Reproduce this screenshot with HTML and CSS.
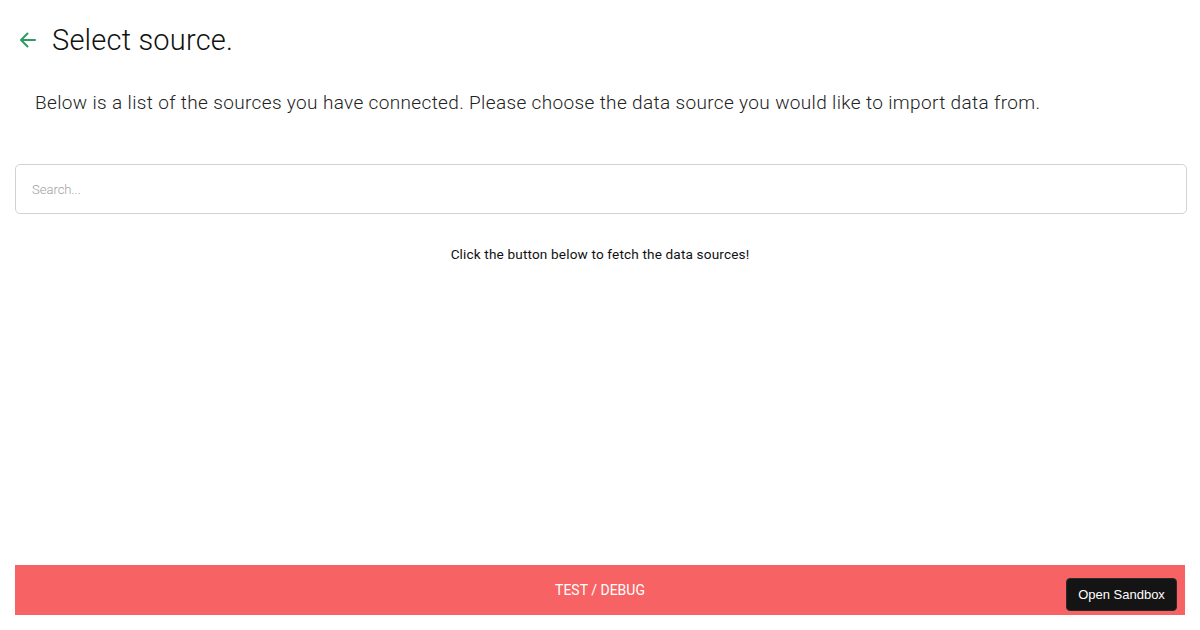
FILE: index.html
```html
<!DOCTYPE html>
<html>
<head>
<meta charset="utf-8">
<link rel="stylesheet" href="styles.css">
</head>
<body>
<div class="page">
  <header class="head">
    <svg class="back" width="20" height="20" viewBox="0 0 20 20"><path d="M17 10H3.5M9.5 3.5L3 10l6.5 6.5" fill="none" stroke="#2f9a63" stroke-width="2" stroke-linecap="round" stroke-linejoin="round"/></svg>
    <h1 class="title">Select source.</h1>
  </header>
  <p class="lead">Below is a list of the sources you have connected. Please choose the data source you would like to import data from.</p>
  <input class="search" type="text" placeholder="Search...">
  <p class="hint">Click the button below to fetch the data sources!</p>
  <div class="spacer"></div>
  <div class="debug">TEST / DEBUG</div>
</div>
<button class="sandbox">Open Sandbox</button>
</body>
</html>
```
FILE: styles.css
```css
html, body { margin: 0; padding: 0; background: #fff; }
body { font-family: Roboto, "Liberation Sans", sans-serif; color: #1a1a1a; width: 1200px; height: 630px; overflow: hidden; position: relative; }
.page { display: flex; flex-direction: column; height: 630px; padding: 0 15px 15px 15px; box-sizing: border-box; }
.head { display: flex; align-items: center; gap: 14px; height: 80px; padding-left: 3px; }
.back { display: block; }
.title { margin: 0; font-weight: 300; font-size: 29px; letter-spacing: 0.2px; color: #111; }
.lead { margin: 0; padding-left: 20px; font-size: 19px; font-weight: 300; letter-spacing: 0.35px; line-height: 46px; color: #222; }
.search { margin-top: 38px; height: 50px; box-sizing: border-box; border: 1px solid #d2d2d2; border-radius: 5px; padding: 0 16px; font-family: Roboto, sans-serif; font-size: 13px; width: 1172px; outline: none; }
.search::placeholder { color: #a0a0a0; font-weight: 300; }
.hint { margin: 32px 0 0; text-align: center; font-size: 13.6px; letter-spacing: 0.15px; color: #111; }
.spacer { flex: 1; }
.debug { width: 1170px; height: 50px; background: #f76365; color: #fff; display: flex; align-items: center; justify-content: center; font-size: 14px; font-weight: 400; letter-spacing: 0; }
.sandbox { position: absolute; left: 1066px; top: 578px; width: 111px; height: 33px; background: #141414; color: #fff; border: 1px solid #2a2a2a; border-radius: 4px; font-family: "Liberation Sans", Arial, sans-serif; font-size: 13px; padding: 0; }
```
